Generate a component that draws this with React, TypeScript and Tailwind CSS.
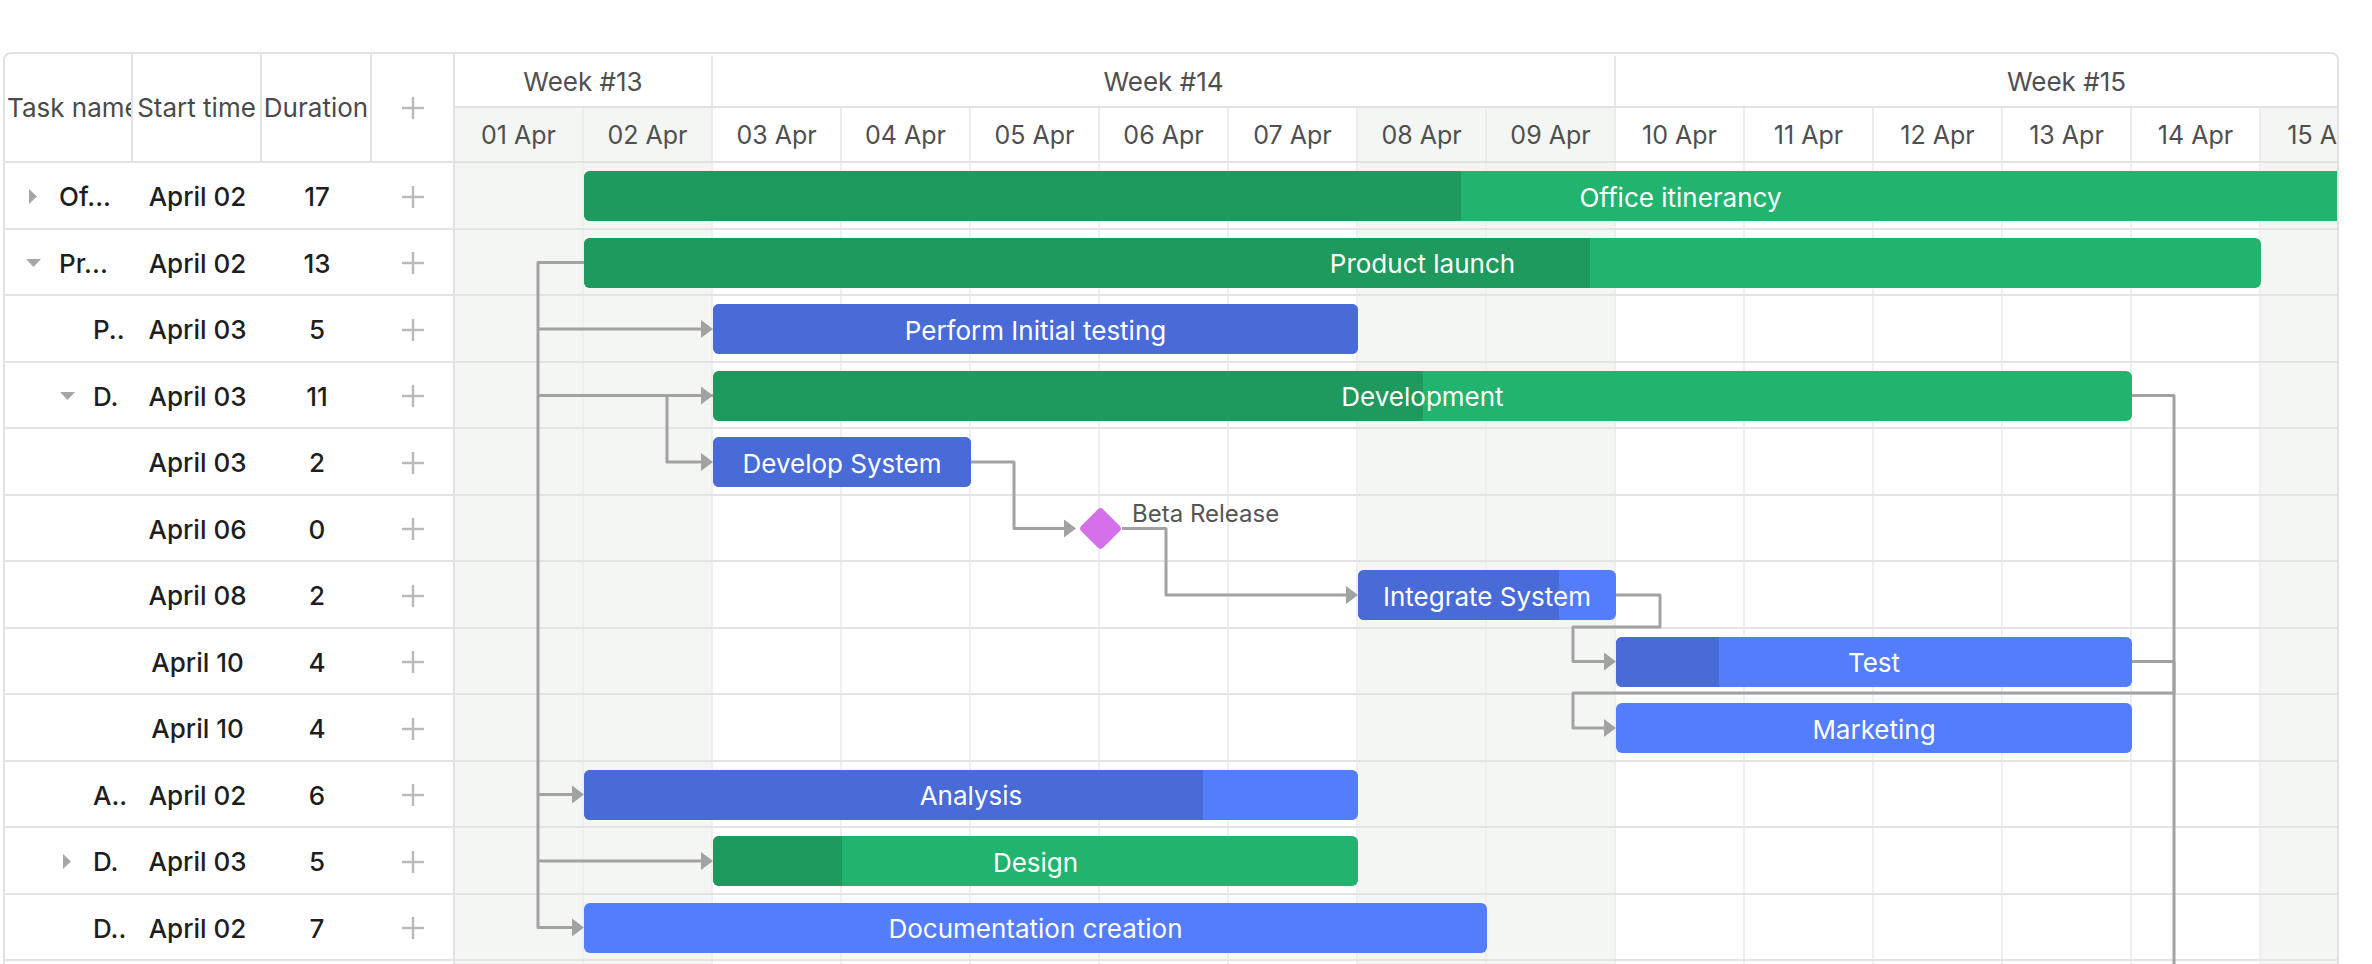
import React from "react";

const DAY = 129;
const ROW = 66.5;

type Tone = "green" | "blue";

type Task = {
  name: string;
  level: 0 | 1 | 2;
  caret?: "open" | "closed";
  start: string;
  duration: number;
  from: number;
  label: string;
  tone?: Tone;
  progress?: number;
  milestone?: boolean;
};

const tasks: Task[] = [
  { name: "Of...", level: 0, caret: "closed", start: "April 02", duration: 17, from: 1, label: "Office itinerancy", tone: "green", progress: 0.4 },
  { name: "Pr...", level: 0, caret: "open", start: "April 02", duration: 13, from: 1, label: "Product launch", tone: "green", progress: 0.6 },
  { name: "P..", level: 1, start: "April 03", duration: 5, from: 2, label: "Perform Initial testing", tone: "blue", progress: 1 },
  { name: "D.", level: 1, caret: "open", start: "April 03", duration: 11, from: 2, label: "Development", tone: "green", progress: 0.5 },
  { name: "", level: 2, start: "April 03", duration: 2, from: 2, label: "Develop System", tone: "blue", progress: 1 },
  { name: "", level: 2, start: "April 06", duration: 0, from: 5, label: "Beta Release", milestone: true },
  { name: "", level: 2, start: "April 08", duration: 2, from: 7, label: "Integrate System", tone: "blue", progress: 0.78 },
  { name: "", level: 2, start: "April 10", duration: 4, from: 9, label: "Test", tone: "blue", progress: 0.2 },
  { name: "", level: 2, start: "April 10", duration: 4, from: 9, label: "Marketing", tone: "blue", progress: 0 },
  { name: "A..", level: 1, start: "April 02", duration: 6, from: 1, label: "Analysis", tone: "blue", progress: 0.8 },
  { name: "D.", level: 1, caret: "closed", start: "April 03", duration: 5, from: 2, label: "Design", tone: "green", progress: 0.2 },
  { name: "D..", level: 1, start: "April 02", duration: 7, from: 1, label: "Documentation creation", tone: "blue", progress: 0 },
];

const tones = {
  green: { base: "bg-[#21b46e]", done: "bg-[#1e9a5e]" },
  blue: { base: "bg-[#537dfa]", done: "bg-[#486bd7]" },
};

const indent = ["pl-[12px]", "pl-[46px]", "pl-[80px]"];

const days = Array.from({ length: 15 }, (_, i) => `${String(i + 1).padStart(2, "0")} Apr`);
const weekend = new Set([0, 1, 7, 8, 14]);

const weeks = [
  { label: "Week #13", w: "w-[258px]" },
  { label: "Week #14", w: "w-[903px]" },
  { label: "Week #15", w: "w-[903px]" },
];

const cy = (i: number) => ROW * i + 33;

// link routes in timeline coordinates, arrow tip is [x, y]
const links: { d: string; tip?: [number, number] }[] = [
  { d: `M129 ${cy(1)} H83 V${cy(11)} H118`, tip: [129, cy(11)] },
  { d: `M83 ${cy(2)} H247`, tip: [258, cy(2)] },
  { d: `M83 ${cy(3)} H247`, tip: [258, cy(3)] },
  { d: `M83 ${cy(9)} H118`, tip: [129, cy(9)] },
  { d: `M83 ${cy(10)} H247`, tip: [258, cy(10)] },
  { d: `M258 ${cy(3)} H212 V${cy(4)} H247`, tip: [258, cy(4)] },
  { d: `M516 ${cy(4)} H559 V${cy(5)} H610`, tip: [621, cy(5)] },
  { d: `M667 ${cy(5)} H711 V${cy(6)} H892`, tip: [903, cy(6)] },
  { d: `M1161 ${cy(6)} H1205 V464 H1118 V${cy(7)} H1150`, tip: [1161, cy(7)] },
  { d: `M1677 ${cy(7)} H1719 V530 H1118 V${cy(8)} H1150`, tip: [1161, cy(8)] },
  { d: `M1677 ${cy(3)} H1719 V900` },
];

function Plus() {
  return (
    <svg width="24" height="24" viewBox="0 0 24 24">
      <path d="M12 1v22M1 12h22" stroke="#bababa" strokeWidth="2.5" />
    </svg>
  );
}

function Caret({ open }: { open: boolean }) {
  return open ? (
    <svg width="15" height="8" viewBox="0 0 15 8">
      <path d="M0 0h15L7.5 8z" fill="#a6a6a6" />
    </svg>
  ) : (
    <svg width="8" height="15" viewBox="0 0 8 15">
      <path d="M0 0v15L8 7.5z" fill="#a6a6a6" />
    </svg>
  );
}

function Bar({ t }: { t: Task }) {
  if (t.milestone) {
    return (
      <>
        <div
          className="absolute top-[17px] h-[31px] w-[31px] rotate-45 rounded-[4px] bg-[#d470ea]"
          style={{ left: t.from * DAY - 15.5 }}
        />
        <div
          className="absolute top-0 whitespace-nowrap text-[24px] text-[#555]"
          style={{ left: t.from * DAY + 32 }}
        >
          {t.label}
        </div>
      </>
    );
  }
  const tone = tones[t.tone ?? "blue"];
  return (
    <div
      className={`absolute top-[8px] h-[50px] overflow-hidden rounded-[6px] ${tone.base}`}
      style={{ left: t.from * DAY, width: t.duration * DAY }}
    >
      <div className={`absolute inset-y-0 left-0 ${tone.done}`} style={{ width: `${(t.progress ?? 0) * 100}%` }} />
      <div className="absolute inset-0 flex items-center justify-center whitespace-nowrap pt-[2px] text-[26px] text-white">
        {t.label}
      </div>
    </div>
  );
}

export default function App() {
  return (
    <div className="h-[964px] w-[2372px] overflow-hidden bg-white pl-[3px] pt-[52px] font-['Inter',sans-serif]">
      <div className="flex h-[960px] w-[2336px] overflow-hidden rounded-t-[8px] border-2 border-[#e2e2e2]">
        {/* grid */}
        <div className="w-[450px] shrink-0 border-r-2 border-[#e2e2e2]">
          <div className="flex h-[109px] border-b-2 border-[#e2e2e2] text-[26px] text-[#4a4a4a]">
            <div className="flex w-[128px] items-center overflow-hidden whitespace-nowrap border-r-2 border-[#e2e2e2] pl-[2px]">
              Task name
            </div>
            <div className="flex w-[129px] items-center justify-center overflow-hidden whitespace-nowrap border-r-2 border-[#e2e2e2]">
              Start time
            </div>
            <div className="flex w-[110px] items-center justify-center whitespace-nowrap border-r-2 border-[#e2e2e2]">
              Duration
            </div>
            <div className="flex w-[81px] items-center justify-center">
              <Plus />
            </div>
          </div>
          {tasks.map((t, i) => (
            <div
              key={i}
              className="flex h-[66.5px] items-center border-b-2 border-[#e4e4e4] pt-[3px] text-[26px] font-medium text-[#1e1e1e]"
            >
              <div className={`flex w-[128px] items-center overflow-hidden whitespace-nowrap ${indent[t.level]}`}>
                <div className="flex w-[32px] shrink-0 items-center justify-center">
                  {t.caret && <Caret open={t.caret === "open"} />}
                </div>
                <span className="ml-[10px]">{t.name}</span>
              </div>
              <div className="w-[129px] text-center">{t.start}</div>
              <div className="w-[110px] text-center">{t.duration}</div>
              <div className="flex w-[81px] justify-center">
                <Plus />
              </div>
            </div>
          ))}
          <div className="h-[66.5px] border-b-2 border-[#e4e4e4]" />
        </div>

        {/* timeline */}
        <div className="min-w-0 flex-1 overflow-hidden">
          <div className="flex h-[54px] border-b-2 border-[#e2e2e2] pt-[2px] text-[26px] text-[#4f4f4f]">
            {weeks.map((w) => (
              <div
                key={w.label}
                className={`flex shrink-0 items-center justify-center border-r-2 border-[#e8e8e8] ${w.w}`}
              >
                {w.label}
              </div>
            ))}
          </div>
          <div className="flex h-[55px] border-b-2 border-[#e2e2e2] text-[25px] text-[#4f4f4f]">
            {days.map((d, i) => (
              <div
                key={d}
                className={`flex w-[129px] shrink-0 items-center justify-center whitespace-nowrap border-r-2 border-[#ececec] pt-[3px] ${
                  weekend.has(i) ? "bg-[#f4f6f4]" : ""
                }`}
              >
                {d}
              </div>
            ))}
          </div>

          <div className="relative">
            <div className="absolute inset-0 flex">
              {days.map((d, i) => (
                <div
                  key={d}
                  className={`h-full w-[129px] shrink-0 border-r-2 border-[#efefef] ${weekend.has(i) ? "bg-[#f4f6f4]" : ""}`}
                />
              ))}
            </div>
            {tasks.map((t, i) => (
              <div key={i} className="relative h-[66.5px] border-b-2 border-[#e4e4e4]">
                <Bar t={t} />
              </div>
            ))}
            <div className="relative h-[66.5px] border-b-2 border-[#e4e4e4]" />

            <svg className="pointer-events-none absolute left-0 top-0" width="1882" height="900">
              {links.map((l, i) => (
                <g key={i}>
                  <path d={l.d} fill="none" stroke="#a2a2a2" strokeWidth="3" strokeLinejoin="round" />
                  {l.tip && (
                    <polygon
                      points={`${l.tip[0] - 12},${l.tip[1] - 9} ${l.tip[0]},${l.tip[1]} ${l.tip[0] - 12},${l.tip[1] + 9}`}
                      fill="#a2a2a2"
                    />
                  )}
                </g>
              ))}
            </svg>
          </div>
        </div>
      </div>
    </div>
  );
}
